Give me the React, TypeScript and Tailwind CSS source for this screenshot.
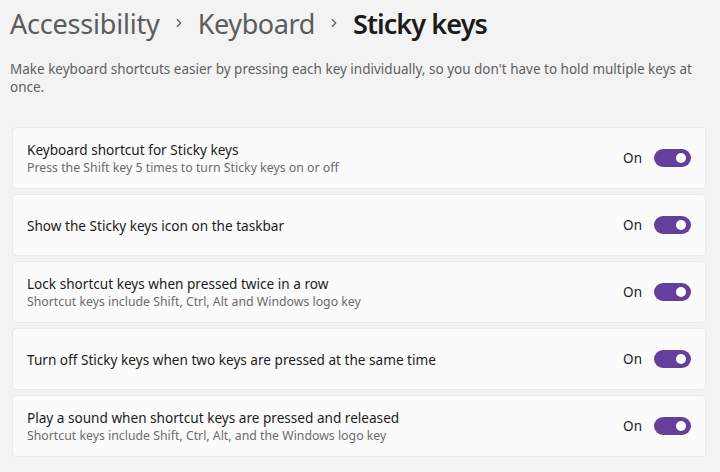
import { ChevronRight } from "lucide-react";

interface Setting {
  title: string;
  desc?: string;
}

const settings: Setting[] = [
  {
    title: "Keyboard shortcut for Sticky keys",
    desc: "Press the Shift key 5 times to turn Sticky keys on or off",
  },
  { title: "Show the Sticky keys icon on the taskbar" },
  {
    title: "Lock shortcut keys when pressed twice in a row",
    desc: "Shortcut keys include Shift, Ctrl, Alt and Windows logo key",
  },
  { title: "Turn off Sticky keys when two keys are pressed at the same time" },
  {
    title: "Play a sound when shortcut keys are pressed and released",
    desc: "Shortcut keys include Shift, Ctrl, Alt, and the Windows logo key",
  },
];

const Toggle = () => (
  <div className="flex items-center justify-end w-[37px] h-[18px] rounded-full bg-[#643f9c] pr-[5px]">
    <div className="w-[10px] h-[10px] rounded-full bg-white" />
  </div>
);

export default function App() {
  return (
    <div
      className="w-[720px] h-[472px] bg-[#f3f3f3] overflow-hidden pt-[3px]"
      style={{ fontFamily: '"Noto Sans", "Open Sans", sans-serif' }}
    >
      {/* Breadcrumb header */}
      <div className="flex items-center h-[40px] pl-[10px] text-[27px] leading-none">
        <span className="text-[#5c5c5c] tracking-[-0.2px]">Accessibility</span>
        <ChevronRight size={14} strokeWidth={2} className="text-[#5c5c5c] mx-[12px]" />
        <span className="text-[#5c5c5c] tracking-[-0.4px]">Keyboard</span>
        <ChevronRight size={14} strokeWidth={2} className="text-[#5c5c5c] mx-[12px]" />
        <span className="text-[#1b1b1b] font-semibold tracking-[-0.9px]">Sticky keys</span>
      </div>

      <p className="pl-[10px] pr-[12px] mt-[17px] text-[13.5px] leading-[18px] text-[#5f5f5f]">
        Make keyboard shortcuts easier by pressing each key individually, so you don't have to hold multiple keys at once.
      </p>

      {/* Settings list */}
      <div className="flex flex-col gap-[5px] mt-[31px] ml-[12px] w-[694px]">
        {settings.map((s) => (
          <div
            key={s.title}
            className="flex items-center justify-between h-[62px] bg-[#fbfbfb] border border-[#e9e9e9] rounded-[4px] pl-[14px] pr-[14px]"
          >
            <div className="flex flex-col">
              <span className="text-[13.6px] leading-[19px] text-[#1b1b1b]">{s.title}</span>
              {s.desc && (
                <span className="text-[12.3px] leading-[17px] text-[#6b6b6b]">{s.desc}</span>
              )}
            </div>
            <div className="flex items-center gap-[12px]">
              <span className="text-[13.5px] text-[#1b1b1b]">On</span>
              <Toggle />
            </div>
          </div>
        ))}
      </div>
    </div>
  );
}
